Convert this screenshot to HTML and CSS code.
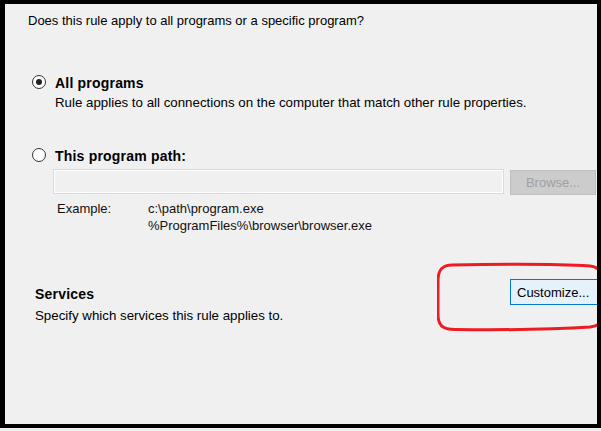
FILE: index.html
```html
<!DOCTYPE html>
<html lang="en">
<head>
    <meta charset="UTF-8">
    <meta name="viewport" content="width=device-width, initial-scale=1.0">
    <title>Program</title>
    <link rel="stylesheet" href="styles.css">
</head>
<body>
    <div class="window">
        <p class="question">Does this rule apply to all programs or a specific program?</p>

        <div class="option first">
            <label class="option-head"><span class="radio checked"></span><span class="title">All programs</span></label>
            <p class="desc">Rule applies to all connections on the computer that match other rule properties.</p>
        </div>

        <div class="option second">
            <label class="option-head"><span class="radio"></span><span class="title">This program path:</span></label>
            <div class="path-row">
                <div class="path-input"></div>
                <button type="button" class="browse">Browse...</button>
            </div>
            <div class="example">
                <span class="example-label">Example:</span>
                <div class="example-paths">
                    <div>c:\path\program.exe</div>
                    <div>%ProgramFiles%\browser\browser.exe</div>
                </div>
            </div>
        </div>

        <div class="services">
            <div class="services-text">
                <div class="title">Services</div>
                <div class="desc-plain">Specify which services this rule applies to.</div>
            </div>
            <button type="button" class="customize">Customize...</button>
        </div>

        <!-- red marker drawn over the screenshot -->
        <svg class="marker" width="170" height="80" viewBox="0 0 170 80">
            <path d="M15 6 C63 5, 123 5, 153 7 C163 8, 168 15, 168 30 L168 50 C168 62, 163 67, 153 68 C123 70, 63 71, 18 70.5 C5 70.5, 1 66, 1 55 L1 22 C1 11, 5 6, 15 6 Z" fill="none" stroke="#ed1c24" stroke-width="3"/>
        </svg>
    </div>
</body>
</html>
```

FILE: styles.css
```css
body {
    margin: 0;
    background-color: #f0f0f0;
    font-family: "Liberation Sans", Arial, sans-serif;
    font-size: 13px;
    line-height: 16px;
    color: #000;
}

.window {
    position: relative;
    box-sizing: border-box;
    width: 601px;
    height: 428px;
    border: 4px solid #000;
    border-left-width: 5px;
    background-color: #f0f0f0;
    overflow: hidden;
    padding-top: 9px;
}

p {
    margin: 0;
}

.question {
    margin-left: 23px;
}

.option {
    margin-left: 27px;
}

.first {
    margin-top: 46px;
}

.second {
    margin-top: 37px;
}

.option-head {
    display: flex;
    align-items: center;
}

.title {
    font-weight: bold;
    font-size: 14px;
    letter-spacing: 0.2px;
}

.radio {
    box-sizing: border-box;
    width: 14px;
    height: 14px;
    margin-right: 9px;
    margin-top: -2px;
    border: 1px solid #333;
    border-radius: 50%;
    background-color: #fff;
    display: flex;
    align-items: center;
    justify-content: center;
}

.radio.checked::after {
    content: "";
    width: 6px;
    height: 6px;
    border-radius: 50%;
    background-color: #222;
}

.desc {
    margin-left: 23px;
    margin-top: 4px;
    font-size: 13.3px;
}

.path-row {
    display: flex;
    margin-left: 21px;
    margin-top: 5px;
    height: 26px;
}

.path-input {
    box-sizing: border-box;
    width: 451px;
    height: 25px;
    border: 1px solid #d9d9d9;
    box-shadow: inset 0 0 0 1px #fff;
    background-color: #f0f0f0;
}

button {
    font-family: inherit;
    font-size: 13px;
    padding: 0;
    box-sizing: border-box;
}

.browse {
    width: 86px;
    height: 25px;
    margin-left: 6px;
    margin-top: 1px;
    border: 1px solid #bfbfbf;
    background-color: #cccccc;
    color: #a0a0a0;
}

.example {
    display: flex;
    margin-left: 25px;
    margin-top: 5px;
    line-height: 17px;
    color: #111;
}

.example-label {
    width: 91px;
}

.services {
    display: flex;
    margin-top: 45px;
    padding-left: 30px;
}

.services-text {
    padding-top: 7px;
}

.desc-plain {
    margin-top: 6px;
    font-size: 13.3px;
}

.customize {
    width: 100px;
    height: 26px;
    margin-left: auto;
    margin-right: -13px;
    border: 1px solid #0078d7;
    background-color: #e5f1fb;
    color: #000;
    text-align: left;
    padding-left: 6px;
}

.marker {
    position: absolute;
    left: 432px;
    top: 255px;
}
```
